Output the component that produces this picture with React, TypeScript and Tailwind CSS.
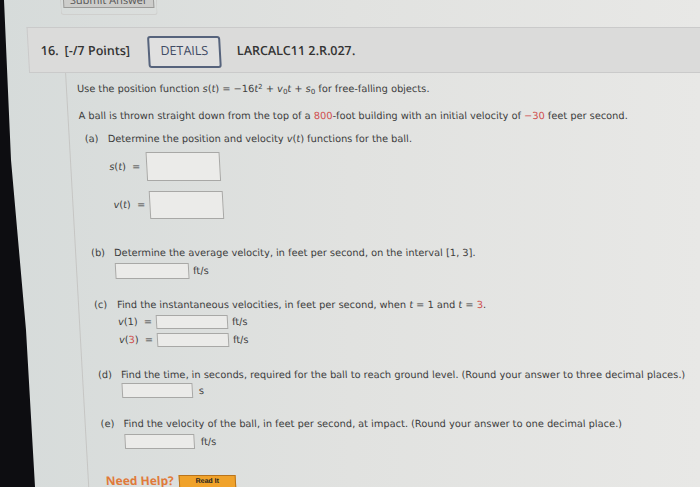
import React from 'react';

const red = 'text-[#cf4c4c]';

function Box({ w, h }: { w: string; h: string }) {
  return <span className={`inline-block ${w} ${h} border border-[#a8a8a6] bg-[#ebebe9]`} />;
}

function Part({ tag, children }: { tag: string; children: React.ReactNode }) {
  return (
    <div className="flex">
      <span className="w-[23px] shrink-0">{tag}</span>
      <span>{children}</span>
    </div>
  );
}

export default function App() {
  return (
    <div className="relative w-[700px] h-[487px] overflow-hidden bg-gradient-to-r from-[#d6dbda] via-[#e1e2e0] to-[#e8e8e6] text-[#3d3d3d] font-['DejaVu_Sans',sans-serif] text-[9.8px]">
      <div className="origin-top-left skew-x-[3.2deg]">
        {/* previous question footer */}
        <div className="ml-[60px] w-[97px] h-[15px] border border-t-0 border-[#cfcfcd] rounded-b-[3px] overflow-hidden flex justify-center">
          <div className="-mt-[9px] h-[17px] px-[6px] bg-[#cdcdcb] border border-[#9a9a98] text-[11px] leading-[15px] text-[#555] font-['Open_Sans',sans-serif]">
            Submit Answer
          </div>
        </div>

        {/* header */}
        <div className="mt-[12px] ml-[25px] h-[46px] pt-[3px] border-y border-l border-[#cacaca] bg-[#dbdbda] flex items-center pl-[12px] font-['Open_Sans',sans-serif] text-[12.5px] font-semibold text-[#333]">
          <span>16.</span>
          <span className="ml-[6px]">[-/7 Points]</span>
          <span className="ml-[18px] w-[73px] h-[32px] flex items-center justify-center border-2 border-[#56637c] rounded-[3px] bg-[#e0e0e0] text-[#3f4b64] font-normal">
            DETAILS
          </span>
          <span className="ml-[16px]">LARCALC11 2.R.027.</span>
        </div>

        {/* question body */}
        <div className="ml-[61px] border-l border-[#c6c6c4] pl-[10px] pt-[9px] h-[440px]">
          <p className="leading-[14px]">
            Use the position function <i>s</i>(<i>t</i>) = −16<i>t</i><sup className="text-[7px]">2</sup> + <i>v</i><sub className="text-[7px]">0</sub><i>t</i> + <i>s</i><sub className="text-[7px]">0</sub> for free-falling objects.
          </p>
          <p className="mt-[13px] leading-[14px]">
            A ball is thrown straight down from the top of a <span className={red}>800</span>-foot building with an initial velocity of <span className={red}>−30</span> feet per second.
          </p>

          <div className="mt-[9px] ml-[5px] leading-[14px]">
            <Part tag="(a)">
              Determine the position and velocity <i>v</i>(<i>t</i>) functions for the ball.
            </Part>
            <div className="mt-[6px] ml-[23px] flex items-center">
              <span className="w-[37px]"><i>s</i>(<i>t</i>) &nbsp;=</span>
              <Box w="w-[74px]" h="h-[29px]" />
            </div>
            <div className="mt-[10px] ml-[25px] flex items-center">
              <span className="w-[36px]"><i>v</i>(<i>t</i>) &nbsp;=</span>
              <Box w="w-[74px]" h="h-[28px]" />
            </div>
          </div>

          <div className="mt-[27px] ml-[5px] leading-[14px]">
            <Part tag="(b)">
              Determine the average velocity, in feet per second, on the interval [1, 3].
            </Part>
            <div className="mt-[3px] ml-[23px] flex items-center gap-[4px]">
              <Box w="w-[74px]" h="h-[16px]" />
              <span>ft/s</span>
            </div>
          </div>

          <div className="mt-[19px] ml-[5px] leading-[14px]">
            <Part tag="(c)">
              Find the instantaneous velocities, in feet per second, when <i>t</i> = 1 and <i>t</i> = <span className={red}>3</span>.
            </Part>
            <div className="mt-[3px] ml-[23px] flex items-center">
              <span className="w-[38px]"><i>v</i>(1) &nbsp;=</span>
              <Box w="w-[72px]" h="h-[14px]" />
              <span className="ml-[4px]">ft/s</span>
            </div>
            <div className="mt-[4px] ml-[23px] flex items-center">
              <span className="w-[38px]"><i>v</i>(<span className={red}>3</span>) &nbsp;=</span>
              <Box w="w-[72px]" h="h-[14px]" />
              <span className="ml-[4px]">ft/s</span>
            </div>
          </div>

          <div className="mt-[21px] ml-[5px] leading-[14px]">
            <Part tag="(d)">
              Find the time, in seconds, required for the ball to reach ground level. (Round your answer to three decimal places.)
            </Part>
            <div className="mt-[1px] ml-[23px] flex items-center gap-[6px]">
              <Box w="w-[71px]" h="h-[15px]" />
              <span>s</span>
            </div>
          </div>

          <div className="mt-[19px] ml-[5px] leading-[14px]">
            <Part tag="(e)">
              Find the velocity of the ball, in feet per second, at impact. (Round your answer to one decimal place.)
            </Part>
            <div className="mt-[3px] ml-[23px] flex items-center gap-[6px]">
              <Box w="w-[70px]" h="h-[15px]" />
              <span>ft/s</span>
            </div>
          </div>

          <div className="mt-[25px] ml-[7px] flex items-center">
            <span className="text-[12px] leading-[14px] font-bold text-[#e07a3a] font-['Open_Sans',sans-serif]">Need Help?</span>
            <span className="ml-[5px] w-[57px] h-[13px] flex items-center justify-center bg-[#f0a22a] border border-[#b9741c] text-[7px] font-bold text-[#222] font-['Liberation_Sans',sans-serif]">
              Read It
            </span>
          </div>
        </div>
      </div>

      {/* screen bezel visible at the left edge of the photo */}
      <svg className="absolute left-0 top-0" width="40" height="487" viewBox="0 0 40 487">
        <polygon points="0,0 4,0 11,160 26,330 35,487 0,487" fill="#0d0d11" />
      </svg>
    </div>
  );
}
